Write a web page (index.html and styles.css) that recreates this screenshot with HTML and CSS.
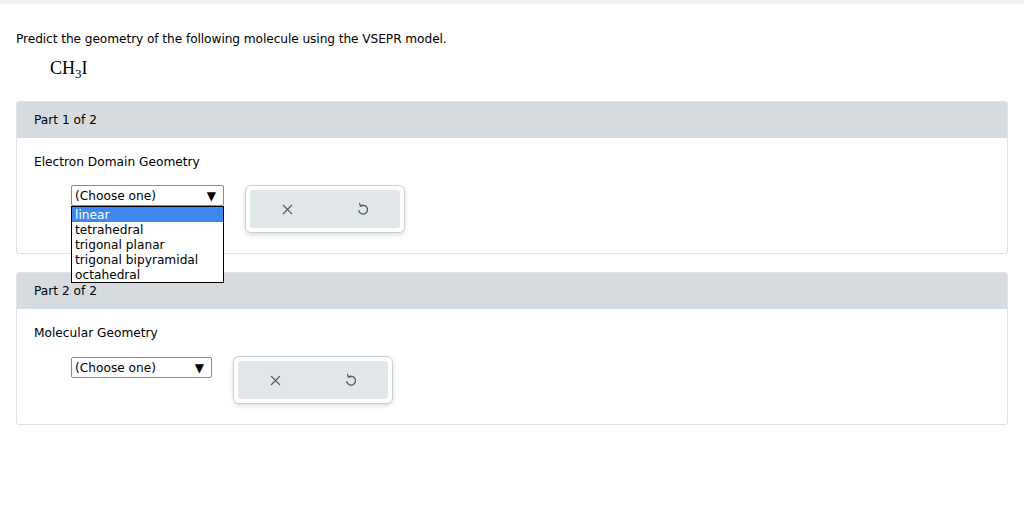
FILE: index.html
```html
<!DOCTYPE html>
<html>
<head>
<meta charset="utf-8">
<link rel="stylesheet" href="styles.css">
</head>
<body>
<div class="topstrip"></div>
<main class="page">
  <p class="question">Predict the geometry of the following molecule using the VSEPR model.</p>
  <p class="formula">CH<sub>3</sub>I</p>

  <section class="card">
    <div class="card-head">Part 1 of 2</div>
    <div class="card-body">
      <div class="label">Electron Domain Geometry</div>
      <div class="answer-row">
        <div class="select-wrap">
          <div class="select wide"><span>(Choose one)</span><span class="arrow">&#9660;</span></div>
          <ul class="options">
            <li class="active">linear</li>
            <li>tetrahedral</li>
            <li>trigonal planar</li>
            <li>trigonal bipyramidal</li>
            <li>octahedral</li>
          </ul>
        </div>
        <div class="btn-group">
          <div class="btn-inner">
            <span class="btn">
              <svg width="11" height="11" viewBox="0 0 12 12"><path d="M1.5 1.5 L10.5 10.5 M10.5 1.5 L1.5 10.5" stroke="#4b5b66" stroke-width="1.5" fill="none" stroke-linecap="round"/></svg>
            </span>
            <span class="btn">
              <svg width="12" height="14" viewBox="0 0 12 14"><path d="M2.6 1.4 L3.4 4.2 L6.2 3.6 M3.4 4.2 A4.4 4.4 0 1 1 1.8 8.6" stroke="#4b5b66" stroke-width="1.3" fill="none" stroke-linecap="round" stroke-linejoin="round"/></svg>
            </span>
          </div>
        </div>
      </div>
    </div>
  </section>

  <section class="card">
    <div class="card-head">Part 2 of 2</div>
    <div class="card-body">
      <div class="label">Molecular Geometry</div>
      <div class="answer-row">
        <div class="select-wrap">
          <div class="select narrow"><span>(Choose one)</span><span class="arrow">&#9660;</span></div>
        </div>
        <div class="btn-group">
          <div class="btn-inner">
            <span class="btn">
              <svg width="11" height="11" viewBox="0 0 12 12"><path d="M1.5 1.5 L10.5 10.5 M10.5 1.5 L1.5 10.5" stroke="#4b5b66" stroke-width="1.5" fill="none" stroke-linecap="round"/></svg>
            </span>
            <span class="btn">
              <svg width="12" height="14" viewBox="0 0 12 14"><path d="M2.6 1.4 L3.4 4.2 L6.2 3.6 M3.4 4.2 A4.4 4.4 0 1 1 1.8 8.6" stroke="#4b5b66" stroke-width="1.3" fill="none" stroke-linecap="round" stroke-linejoin="round"/></svg>
            </span>
          </div>
        </div>
      </div>
    </div>
  </section>
</main>
</body>
</html>
```

FILE: styles.css
```css
html, body {
  margin: 0;
  padding: 0;
  background: #ffffff;
}
body {
  font-family: "DejaVu Sans", Verdana, sans-serif;
  font-size: 12.2px;
  color: #000;
}
.topstrip {
  height: 4px;
  background: #f1f2f4;
}
.page {
  padding: 0 16px;
}
.question {
  margin: 27px 0 0 0;
  line-height: 16px;
  letter-spacing: -0.08px;
}
.formula {
  margin: 11px 0 0 34px;
  font-family: "Liberation Serif", "Times New Roman", serif;
  font-size: 18px;
  line-height: 20px;
  height: 39px;
}
.formula sub {
  font-size: 13px;
  vertical-align: -4px;
  line-height: 0;
}
.card {
  margin-top: 4px;
  border: 1px solid #dfe3e6;
  border-radius: 3px;
  margin-bottom: 18px;
}
.card + .card {
  margin-top: 0;
}
.card-head {
  background: #d5dbdf;
  height: 36px;
  line-height: 37px;
  padding-left: 17px;
  border-radius: 2px 2px 0 0;
}
.card-body {
  padding: 16px 17px 20px 17px;
}
.label {
  line-height: 17px;
}
.answer-row {
  display: flex;
  align-items: flex-start;
  gap: 21px;
  margin-top: 14px;
  padding-left: 37px;
}
.select-wrap {
  position: relative;
}
.select {
  box-sizing: border-box;
  height: 21px;
  border: 1px solid #8a8a8a;
  border-radius: 2px;
  display: flex;
  align-items: center;
  justify-content: space-between;
  padding: 1px 7px 0 3px;
  background: #fff;
}
.select.wide { width: 153px; }
.select.narrow { width: 141px; margin-top: 1px; }
.arrow {
  font-size: 12px;
  line-height: 1;
}
.options {
  position: absolute;
  top: 21px;
  left: 0;
  width: 153px;
  box-sizing: border-box;
  margin: 0;
  padding: 0;
  list-style: none;
  border: 1px solid #000;
  background: #fff;
  z-index: 5;
}
.options li {
  height: 15px;
  line-height: 16px;
  padding-left: 3px;
}
.options li.active {
  background: #3c88ef;
  color: #fff;
}
.btn-group {
  box-sizing: border-box;
  width: 160px;
  height: 48px;
  border: 1px solid #c8cfd4;
  border-radius: 6px;
  padding: 4px;
  box-shadow: 0 2px 4px rgba(0, 0, 0, 0.14);
  background: #fff;
}
.btn-inner {
  height: 100%;
  background: #e1e6e9;
  border-radius: 3px;
  display: flex;
}
.btn {
  flex: 1;
  display: flex;
  align-items: center;
  justify-content: center;
}
```
